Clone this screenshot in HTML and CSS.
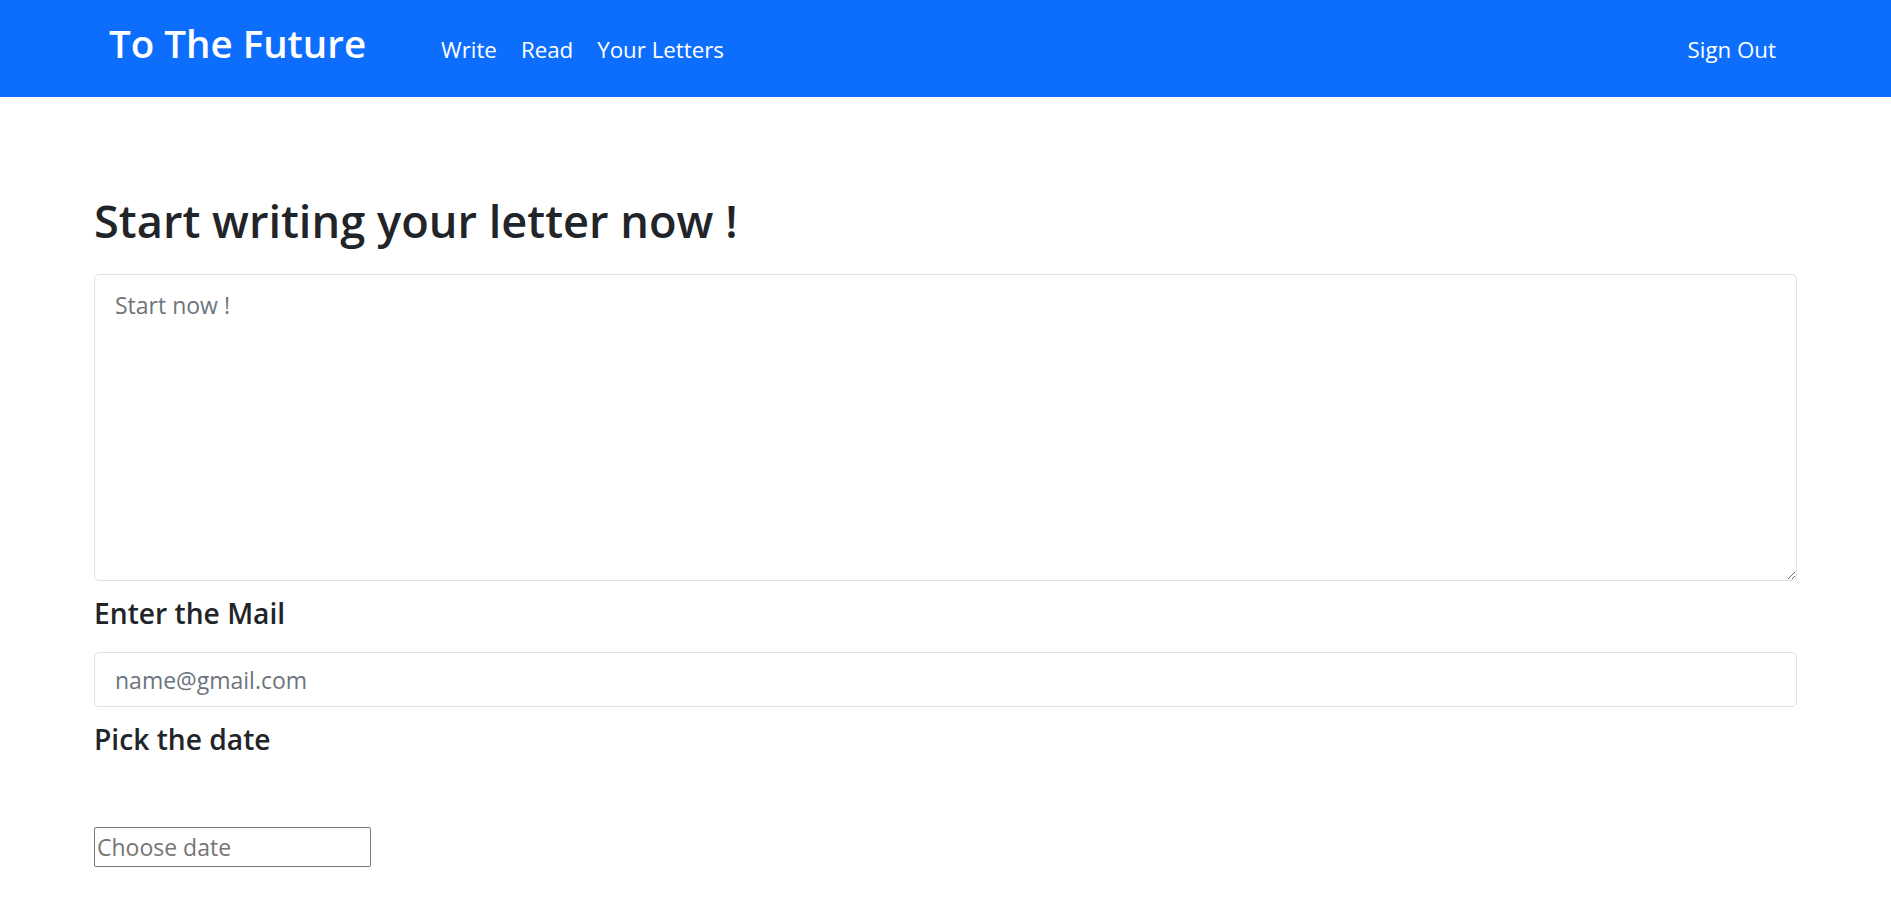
FILE: index.html
```html
<!DOCTYPE html>
<html lang="en">
<head>
<meta charset="utf-8">
<title>To The Future</title>
<link rel="stylesheet" href="styles.css">
</head>
<body>
<nav class="navbar">
  <a class="brand" href="#">To The Future</a>
  <ul class="nav-links">
    <li><a class="nav-link" href="#">Write</a></li>
    <li><a class="nav-link" href="#">Read</a></li>
    <li><a class="nav-link" href="#">Your Letters</a></li>
  </ul>
  <a class="nav-link sign-out" href="#">Sign Out</a>
</nav>
<main class="page">
  <h1 class="title">Start writing your letter now !</h1>
  <textarea class="field letter" placeholder="Start now !"></textarea>
  <h4 class="label">Enter the Mail</h4>
  <input class="field mail" type="email" placeholder="name@gmail.com">
  <h4 class="label">Pick the date</h4>
  <input class="date" type="text" placeholder="Choose date">
</main>
</body>
</html>
```

FILE: styles.css
```css
* { box-sizing: border-box; }

body {
  margin: 0;
  font-family: "Open Sans", "Noto Sans", "Liberation Sans", sans-serif;
  color: #212529;
  background: #fff;
}

.navbar {
  display: flex;
  align-items: baseline;
  height: 97px;
  padding: 19px 103px 0 109px;
  background: #0d6efd;
}

.brand {
  font-size: 38.5px;
  line-height: 48px;
  font-weight: 600;
  color: #fff;
  text-decoration: none;
}

.nav-links {
  display: flex;
  list-style: none;
  margin: 0 0 0 63px;
  padding: 0;
}

.nav-link {
  display: block;
  padding: 0 12px;
  font-size: 22.3px;
  line-height: 34px;
  color: #fff;
  text-decoration: none;
}

.sign-out {
  margin-left: auto;
}

.page {
  display: flex;
  flex-direction: column;
  align-items: flex-start;
  padding: 96px 94px 40px;
}

.title {
  margin: 0;
  font-size: 45.2px;
  line-height: 56px;
  font-weight: 600;
}

.field {
  width: 100%;
  font-family: inherit;
  font-size: 23px;
  line-height: 1.5;
  color: #212529;
  background: #fff;
  border: 1px solid #dee2e6;
  border-radius: 5px;
  padding: 10px 20px;
  outline: none;
}

.field::placeholder {
  color: #6c757d;
  opacity: 1;
}

.letter {
  margin-top: 25px;
  height: 307px;
  padding-top: 13px;
  resize: vertical;
}

.label {
  margin: 15px 0 0;
  font-size: 28.2px;
  line-height: 34px;
  font-weight: 600;
}

.mail {
  margin-top: 22px;
  height: 55px;
  padding: 0 20px;
}

.date {
  margin-top: 71px;
  width: 277px;
  height: 40px;
  padding: 1px 2px;
  font-family: inherit;
  font-size: 23px;
  border: 1px solid #767676;
  border-radius: 2px;
  color: #212529;
}

.date::placeholder {
  color: #757575;
  opacity: 1;
}
```
